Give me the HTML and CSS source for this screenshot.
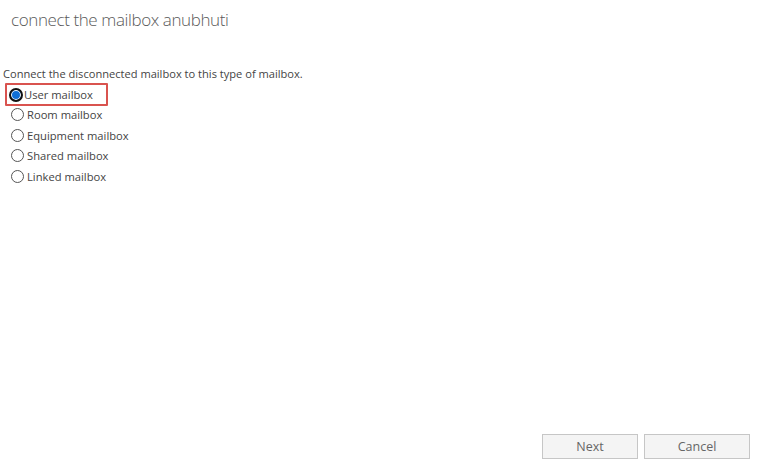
FILE: index.html
```html
<!DOCTYPE html>
<html>
<head>
<meta charset="utf-8">
<link rel="stylesheet" href="styles.css">
</head>
<body>
<div class="page">
  <h1 class="title">connect the mailbox anubhuti</h1>
  <p class="desc">Connect the disconnected mailbox to this type of mailbox.</p>
  <div class="options">
    <label class="opt selected"><span class="radio checked"></span><span class="lbl">User mailbox</span></label>
    <label class="opt"><span class="radio"></span><span class="lbl">Room mailbox</span></label>
    <label class="opt"><span class="radio"></span><span class="lbl">Equipment mailbox</span></label>
    <label class="opt"><span class="radio"></span><span class="lbl">Shared mailbox</span></label>
    <label class="opt"><span class="radio"></span><span class="lbl">Linked mailbox</span></label>
  </div>
  <div class="spacer"></div>
  <div class="buttons">
    <button class="btn next">Next</button>
    <button class="btn cancel">Cancel</button>
  </div>
</div>
</body>
</html>
```
FILE: styles.css
```css
html, body {
  margin: 0;
  padding: 0;
  background: #fff;
}
.page {
  width: 768px;
  height: 466px;
  display: flex;
  flex-direction: column;
  font-family: "Open Sans", "Noto Sans", sans-serif;
  box-sizing: border-box;
}
.title {
  margin: 8px 0 0 11px;
  font-size: 17px;
  font-weight: 300;
  color: #5a5a5a;
  line-height: 24px;
  letter-spacing: -0.4px;
}
.desc {
  margin: 34px 0 0 3px;
  font-size: 11.1px;
  color: #444;
  line-height: 16px;
}
.options {
  display: flex;
  flex-direction: column;
  margin-top: 2px;
}
.opt {
  display: flex;
  align-items: center;
  height: 20.5px;
  padding-left: 11px;
  font-size: 11.2px;
  color: #444;
}
.opt.selected {
  margin: -1px 0 -1.5px 5px;
  padding-left: 2px;
  width: 97px;
  height: 19px;
  border: 2px solid #d9534f;
  border-radius: 1px;
}
.radio {
  width: 11px;
  height: 11px;
  border: 1px solid #555;
  border-radius: 50%;
  margin-right: 3px;
  box-sizing: content-box;
  flex: none;
}
.radio.checked {
  width: 10px;
  height: 10px;
  border: 2px solid #111;
  background: #0f6fd8;
  box-shadow: inset 0 0 0 1px #fff;
  margin-right: 1px;
}
.spacer {
  flex: 1;
}
.buttons {
  display: flex;
  justify-content: flex-end;
  gap: 6px;
  padding: 0 18px 7px 0;
}
.btn {
  height: 25px;
  background: #f4f4f4;
  border: 1px solid #c6c6c6;
  color: #666;
  font-family: "Open Sans", "Noto Sans", sans-serif;
  font-size: 12.5px;
  padding: 0;
}
.next { width: 96px; }
.cancel { width: 106px; }
```
